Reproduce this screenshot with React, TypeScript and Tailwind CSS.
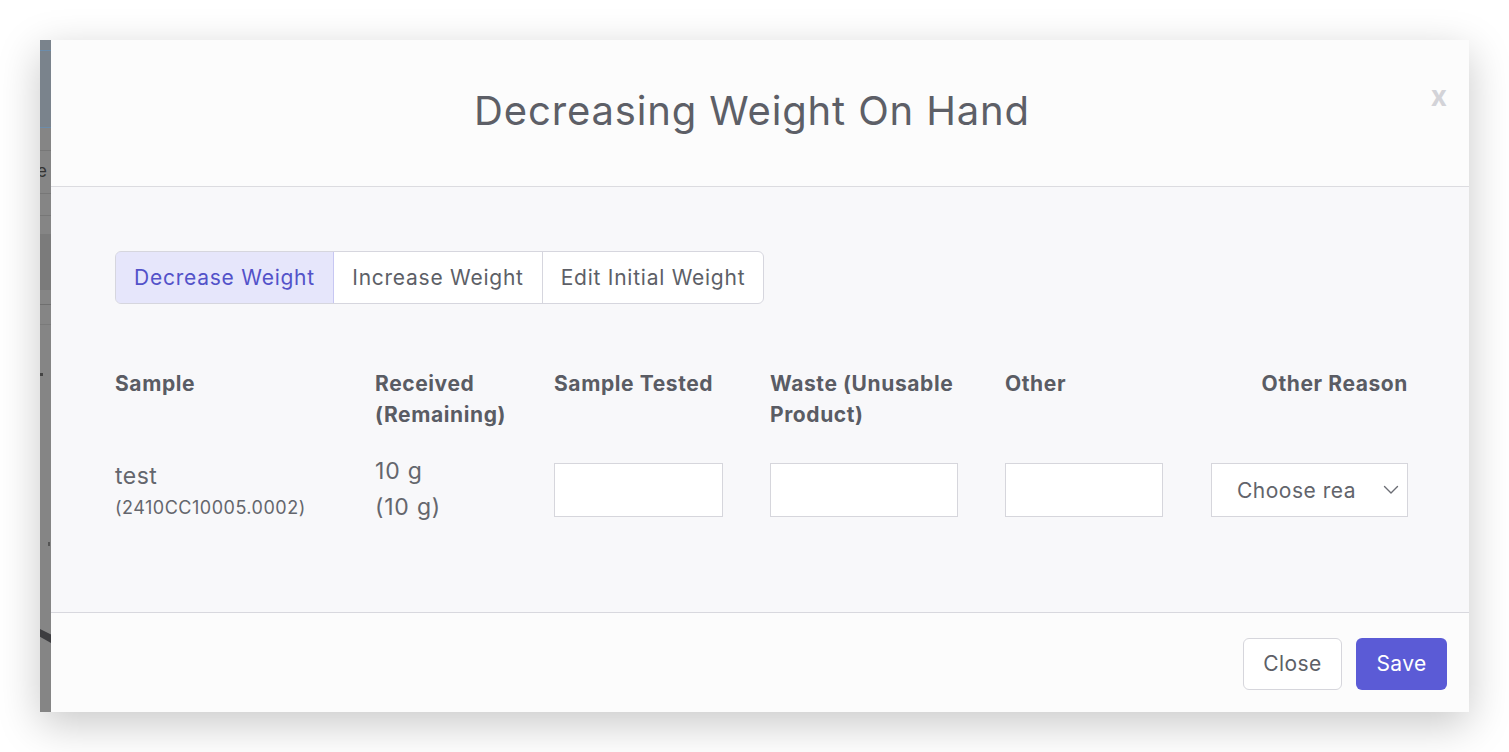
import React from 'react';

const Chevron = () => (
  <svg width="16" height="10" viewBox="0 0 16 10" fill="none" stroke="#6b6d74" strokeWidth="1.4" strokeLinecap="round" strokeLinejoin="round">
    <path d="M1.5 1.5 L8 8 L14.5 1.5" />
  </svg>
);

// dimmed page behind the modal, only a sliver shows on the left
const BackdropStrip = () => (
  <div className="w-[11px] flex flex-col bg-[#858585] overflow-hidden">
    <div className="h-[88px] bg-[#7a838c] flex flex-col border-b border-[#6b8cab]">
      <div className="mt-[10px] h-[1px] bg-[#6b8cab]" />
    </div>
    <div className="h-[23px] border-b border-[#777]" />
    <div className="h-[43px] border-b border-[#777] text-[17px] leading-[40px] text-[#333] -ml-[3px]">e</div>
    <div className="h-[22px] border-b border-[#777]" />
    <div className="h-[18px]" />
    <div className="h-[56px] bg-[#7b7b7b]" />
    <div className="h-[15px] border-b border-[#6f6f6f]" />
    <div className="h-[20px] border-b border-[#7a7a7a]" />
    <div className="h-[48px]" />
    <div className="h-[3px] w-[3px] bg-[#444]" />
    <div className="h-[166px]" />
    <div className="h-[4px] w-[2px] ml-[8px] bg-[#555]" />
    <div className="h-[83px]" />
    <div className="h-[14px] w-[11px] bg-[#3d3d40] [clip-path:polygon(0_0,100%_40%,100%_100%,0_55%)]" />
  </div>
);

const headers = ['Sample', 'Received (Remaining)', 'Sample Tested', 'Waste (Unusable Product)', 'Other'];

export default function App() {
  return (
    <div className="h-[752px] w-full bg-white pt-[40px] pl-[40px] font-['Inter',sans-serif]">
      <div className="flex w-[1429px] h-[672px] shadow-[0_12px_40px_rgba(0,0,0,0.22)]">
        <BackdropStrip />
        <div className="flex-1 flex flex-col">
          <div className="relative h-[147px] bg-[#fcfcfc] border-b border-[#dcdce0] flex items-center justify-center">
            <h1 className="text-[40px] leading-[48px] tracking-[0.85px] text-[#5d5f67] -mt-[4px] -ml-[16px]">Decreasing Weight On Hand</h1>
            <button className="absolute right-[22px] top-[40px] text-[28px] leading-[32px] font-bold text-[#d3d3d8]">x</button>
          </div>

          <div className="flex-1 bg-[#f8f8fa] border-b border-[#d8d8de] pl-[64px] pt-[64px]">
            <div className="inline-flex h-[53px] rounded-[6px] border border-[#d6d6de] bg-white overflow-hidden text-[21px] tracking-[0.75px] text-[#5d5f67]">
              <div className="w-[219px] flex items-center justify-center bg-[#e6e6fb] text-[#5352c9] -m-[1px] mr-0 rounded-l-[6px] border border-[#c7c7f2]">Decrease Weight</div>
              <div className="w-[209px] flex items-center justify-center border-r border-[#d6d6de]">Increase Weight</div>
              <div className="w-[220px] flex items-center justify-center">Edit Initial Weight</div>
            </div>

            <div className="mt-[64px] w-[1293px] grid grid-cols-[260px_179px_216px_235px_206px_197px] text-[21px] tracking-[0.6px] font-bold text-[#5a5c64] leading-[31px]">
              {headers.map((h) => (
                <div key={h} className={h === 'Received (Remaining)' ? 'pr-[20px]' : h === 'Waste (Unusable Product)' ? 'pr-[30px]' : ''}>{h}</div>
              ))}
              <div className="text-right">Other Reason</div>
            </div>

            <div className="mt-[23px] w-[1293px] grid grid-cols-[260px_179px_216px_235px_206px_197px] items-start text-[#64666d]">
              <div className="pt-[7px]">
                <div className="text-[23px] tracking-[0.5px] leading-[32px]">test</div>
                <div className="text-[18px] tracking-[0.5px] leading-[32px]">(2410CC10005.0002)</div>
              </div>
              <div className="text-[23px] tracking-[0.8px] leading-[36px]">
                <div>10 g</div>
                <div>(10 g)</div>
              </div>
              <div className="mt-[10px] w-[169px] h-[54px] bg-white border border-[#d6d6dc]" />
              <div className="mt-[10px] w-[188px] h-[54px] bg-white border border-[#d6d6dc]" />
              <div className="mt-[10px] w-[158px] h-[54px] bg-white border border-[#d6d6dc]" />
              <div className="mt-[10px] w-[197px] h-[54px] bg-white border border-[#d6d6dc] flex items-center pl-[25px] pr-[8px] text-[21px] tracking-[0.5px] text-[#62646b]">
                <span className="flex-1 pt-[2px]">Choose rea</span>
                <Chevron />
              </div>
            </div>
          </div>

          <div className="h-[99px] bg-[#fcfcfc] flex items-center justify-end gap-[14px] pr-[22px] pt-[2px]">
            <button className="w-[99px] h-[52px] rounded-[6px] border border-[#d6d6dc] bg-white text-[21px] tracking-[0.4px] text-[#5d5f67]">Close</button>
            <button className="w-[91px] h-[52px] rounded-[6px] bg-[#5b5bd6] text-[21px] tracking-[0.4px] text-white">Save</button>
          </div>
        </div>
      </div>
    </div>
  );
}
